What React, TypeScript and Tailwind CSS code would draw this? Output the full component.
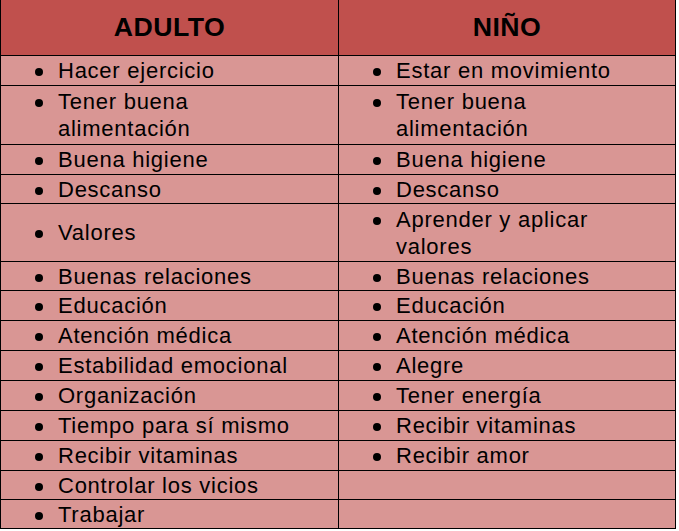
const rows: { left: string; right: string; h: string }[] = [
  { left: "Hacer ejercicio", right: "Estar en movimiento", h: "h-[30px]" },
  { left: "Tener buena alimentación", right: "Tener buena alimentación", h: "h-[59px]" },
  { left: "Buena higiene", right: "Buena higiene", h: "h-[30px]" },
  { left: "Descanso", right: "Descanso", h: "h-[29px]" },
  { left: "Valores", right: "Aprender y aplicar valores", h: "h-[58px]" },
  { left: "Buenas relaciones", right: "Buenas relaciones", h: "h-[29px]" },
  { left: "Educación", right: "Educación", h: "h-[30px]" },
  { left: "Atención médica", right: "Atención médica", h: "h-[30px]" },
  { left: "Estabilidad emocional", right: "Alegre", h: "h-[30px]" },
  { left: "Organización", right: "Tener energía", h: "h-[30px]" },
  { left: "Tiempo para sí mismo", right: "Recibir vitaminas", h: "h-[30px]" },
  { left: "Recibir vitaminas", right: "Recibir amor", h: "h-[30px]" },
  { left: "Controlar los vicios", right: "", h: "h-[29px]" },
  { left: "Trabajar", right: "", h: "h-[29px]" },
];

const Item = ({ text }: { text: string }) => {
  if (!text) return null;
  return (
    <div className="flex items-start pl-[34px]">
      <span className="mt-[11px] w-[8px] h-[8px] rounded-full bg-black shrink-0" />
      <span className="ml-[15px] w-[255px] leading-[27px] text-[22px] tracking-[0.75px]">{text}</span>
    </div>
  );
};

const App = () => {
  return (
    <div className="min-h-screen bg-white font-['Liberation_Sans',Arial,sans-serif]">
      <div className="w-[676px] border-l border-r border-black text-black">
        {/* Encabezado */}
        <div className="grid grid-cols-[338px_1fr] h-[56px] bg-[#C0504D] border-b border-black">
          <div className="flex items-center justify-center border-r border-black text-[26.7px] font-bold tracking-[0.5px]">
            ADULTO
          </div>
          <div className="flex items-center justify-center text-[26.7px] font-bold tracking-[0.5px]">
            NIÑO
          </div>
        </div>

        {/* Filas */}
        {rows.map((row, i) => (
          <div key={i} className={`grid grid-cols-[338px_1fr] bg-[#D99694] border-b border-black ${row.h}`}>
            <div className="flex items-center border-r border-black">
              <Item text={row.left} />
            </div>
            <div className="flex items-center">
              <Item text={row.right} />
            </div>
          </div>
        ))}
      </div>
    </div>
  );
};

export default App;
